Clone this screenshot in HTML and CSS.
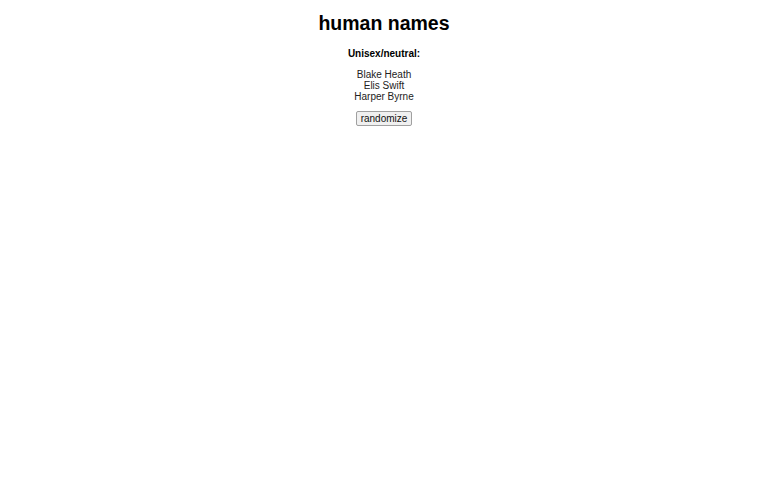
FILE: index.html
```html
<!DOCTYPE html>
<html lang="en">
<head>
    <meta charset="UTF-8">
    <title>human names</title>
    <link rel="stylesheet" href="styles.css">
</head>
<body>
    <h1>human names</h1>
    <div class="group">
        <h2>Unisex/neutral:</h2>
        <div id="names" class="names">
            <div>Blake Heath</div>
            <div>Elis Swift</div>
            <div>Harper Byrne</div>
        </div>
    </div>
    <button class="rand">randomize</button>
</body>
</html>
```
FILE: styles.css
```css
body {
    font-family: 'Liberation Sans', Arial, sans-serif;
    font-size: 10px;
    text-align: center;
    margin: 8px;
    color: #000;
}
h1 {
    font-size: 19.5px;
    margin: 4px 0 13px;
}
h2 {
    font-size: 10px;
    margin: 0 0 10px;
}
.names {
    line-height: 11px;
    color: #222;
}
.rand {
    font-family: 'Liberation Sans', Arial, sans-serif;
    font-size: 10px;
    margin-top: 9px;
    padding: 1px 4px;
    color: #111;
    background: #f0f0f0;
    border: 1px solid #a0a0a0;
    border-radius: 2px;
}
```
